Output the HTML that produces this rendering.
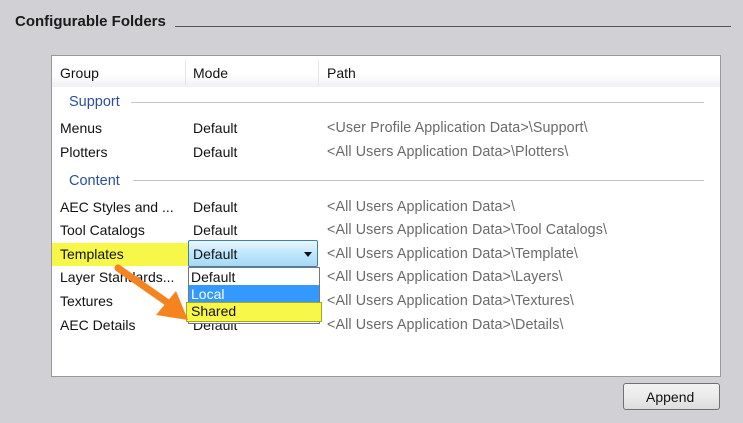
<!DOCTYPE html>
<html><head><style>
body{margin:0;width:743px;height:423px;background:#d1d1d5;font-family:"Liberation Sans",sans-serif;position:relative;overflow:hidden}
.a{position:absolute;white-space:nowrap}
.t{font-size:14px;color:#111}
.p{font-size:14.3px;color:#6a6a6a;letter-spacing:0.1px}
.g{font-size:14.5px;color:#2b4f9e}
.ln{position:absolute;height:1px;background:#c4c4c8}
</style></head><body>
<div class="a" style="left:15px;top:13px;font-size:15px;font-weight:bold;color:#1a1a1a">Configurable Folders</div>
<div style="position:absolute;left:175px;top:26px;width:556px;height:1px;background:#555"></div>
<div style="position:absolute;left:51px;top:55px;width:668px;height:320px;background:#fff;border:1px solid #9a9a9e"></div>
<div style="position:absolute;left:52px;top:56px;width:668px;height:31px;background:linear-gradient(#fff 60%,#f0f0f2)"></div>
<div style="position:absolute;left:185px;top:60px;width:1px;height:26px;background:#e4e4e8"></div>
<div style="position:absolute;left:318px;top:60px;width:1px;height:26px;background:#e4e4e8"></div>
<div class="a t" style="left:60px;top:65px">Group</div>
<div class="a t" style="left:193px;top:65px">Mode</div>
<div class="a t" style="left:327px;top:65px">Path</div>
<div class="a g" style="left:69px;top:94px">Support</div>
<div class="ln" style="left:131px;top:102px;width:573px"></div>
<div class="a g" style="left:69px;top:173px">Content</div>
<div class="ln" style="left:133px;top:180px;width:571px"></div>
<div style="position:absolute;left:52px;top:243px;width:136px;height:23px;background:#f7f74a"></div>
<div class="a t" style="left:60px;top:120px">Menus</div><div class="a t" style="left:193px;top:120px">Default</div><div class="a p" style="left:327px;top:120px">&lt;User Profile Application Data&gt;\Support\</div>
<div class="a t" style="left:60px;top:144px">Plotters</div><div class="a t" style="left:193px;top:144px">Default</div><div class="a p" style="left:327px;top:144px">&lt;All Users Application Data&gt;\Plotters\</div>
<div class="a t" style="left:60px;top:199px">AEC Styles and ...</div><div class="a t" style="left:193px;top:199px">Default</div><div class="a p" style="left:327px;top:199px">&lt;All Users Application Data&gt;\</div>
<div class="a t" style="left:60px;top:222px">Tool Catalogs</div><div class="a t" style="left:193px;top:222px">Default</div><div class="a p" style="left:327px;top:222px">&lt;All Users Application Data&gt;\Tool Catalogs\</div>
<div class="a t" style="left:60px;top:246px">Templates</div><div class="a p" style="left:327px;top:246px">&lt;All Users Application Data&gt;\Template\</div>
<div class="a t" style="left:60px;top:269px">Layer Standards...</div><div class="a p" style="left:327px;top:269px">&lt;All Users Application Data&gt;\Layers\</div>
<div class="a t" style="left:60px;top:293px">Textures</div><div class="a p" style="left:327px;top:293px">&lt;All Users Application Data&gt;\Textures\</div>
<div class="a t" style="left:60px;top:317px">AEC Details</div><div class="a t" style="left:193px;top:317px">Default</div><div class="a p" style="left:327px;top:317px">&lt;All Users Application Data&gt;\Details\</div>
<div style="position:absolute;left:188px;top:240px;width:128px;height:25px;border:1px solid #3c7fb1;border-radius:2px;background:linear-gradient(#eaf6fd,#bee6fd 50%,#a7d9f5)"></div>
<div class="a t" style="left:193px;top:246px">Default</div>
<div style="position:absolute;left:304px;top:252px;width:0;height:0;border-left:4px solid transparent;border-right:4px solid transparent;border-top:5px solid #111"></div>
<div style="position:absolute;left:188px;top:267px;width:130px;height:55px;background:#fff;border:1px solid #777"></div>
<div style="position:absolute;left:189px;top:285px;width:130px;height:17px;background:#3399ff"></div>
<div style="position:absolute;left:186px;top:302px;width:136px;height:20px;background:#f7f74a;border:1px solid #a8a820;box-sizing:border-box"></div>
<div class="a t" style="left:191px;top:269px">Default</div>
<div class="a t" style="left:191px;top:286px;color:#fff">Local</div>
<div class="a t" style="left:191px;top:303px">Shared</div>
<svg style="position:absolute;left:0;top:0" width="743" height="423"><line x1="118" y1="268" x2="168" y2="303" stroke="#f5841f" stroke-width="7" stroke-linecap="round"/><polygon points="188,320 156,315 176,291" fill="#f5841f"/></svg>
<div style="position:absolute;left:623px;top:383px;width:95px;height:25px;border:1px solid #707070;border-radius:3px;background:linear-gradient(#f2f2f2,#ebebeb 50%,#dcdcdc)"></div>
<div class="a t" style="left:646px;top:389px">Append</div>
</body></html>
